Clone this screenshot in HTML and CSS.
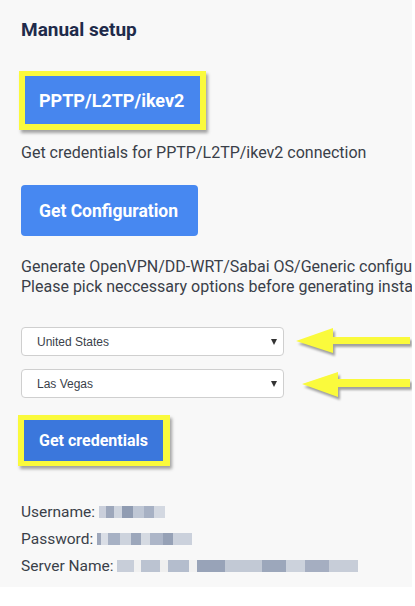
FILE: index.html
```html
<!DOCTYPE html>
<html>
<head>
<meta charset="utf-8">
<link rel="stylesheet" href="styles.css">
</head>
<body>
<div class="page">
  <h2 class="title">Manual setup</h2>
  <div class="hl hl-pptp"><span class="btn btn-pptp">PPTP/L2TP/ikev2</span></div>
  <p class="desc">Get credentials for PPTP/L2TP/ikev2 connection</p>
  <span class="btn btn-config">Get Configuration</span>
  <p class="desc2">Generate OpenVPN/DD-WRT/Sabai OS/Generic configuration files.<br>Please pick neccessary options before generating installation files.</p>
  <div class="select select-first"><span>United States</span><i class="caret"></i></div>
  <div class="select select-second"><span>Las Vegas</span><i class="caret"></i></div>
  <div class="hl hl-cred"><span class="btn btn-cred">Get credentials</span></div>
  <div class="creds">
    <div class="cred-line">Username: <span class="blur blur-user"></span></div>
    <div class="cred-line">Password: <span class="blur blur-pass"></span></div>
    <div class="cred-line">Server Name: <span class="blur blur-server"></span></div>
  </div>
  <svg class="arrows" width="412" height="587" viewBox="0 0 412 587">
    <defs>
      <filter id="sh" x="-10%" y="-30%" width="130%" height="180%">
        <feGaussianBlur stdDeviation="1.2"/>
      </filter>
    </defs>
    <g transform="translate(2,3)" fill="rgba(0,0,0,0.35)" filter="url(#sh)">
      <polygon points="296,341 333,328 333,337 410,337 410,344 333,344 333,353"/>
      <polygon points="302,384 338,372 338,379 410,379 410,387 338,387 338,397"/>
    </g>
    <g fill="#fafa3c">
      <polygon points="296,341 333,328 333,337 410,337 410,344 333,344 333,353"/>
      <polygon points="302,384 338,372 338,379 410,379 410,387 338,387 338,397"/>
    </g>
  </svg>
</div>
</body>
</html>
```
FILE: styles.css
```css
html, body {
  margin: 0;
  padding: 0;
  background: #ffffff;
}

.page {
  position: relative;
  width: 412px;
  height: 587px;
  box-sizing: border-box;
  padding: 16px 0 0 21px;
  background: #f8f8f8;
  overflow: hidden;
  display: flex;
  flex-direction: column;
  align-items: flex-start;
  font-family: Roboto, "Liberation Sans", sans-serif;
  color: #3a3f49;
}

.title {
  margin: 0;
  font-size: 19px;
  line-height: 28px;
  font-weight: 700;
  color: #1f2b4b;
}

.hl {
  display: flex;
  border-style: solid;
  border-color: #fafa3c;
  box-shadow: 2px 3px 3px rgba(0, 0, 0, 0.35);
}

.hl-pptp {
  margin: 27px 0 0 -2px;
  border-width: 5px 6px 6px 6px;
}

.hl-cred {
  margin: 17px 0 0 -3px;
  border-width: 5px 7px 5px 6px;
}

.btn {
  display: flex;
  align-items: center;
  color: #ffffff;
  font-weight: 700;
  font-size: 18px;
  white-space: nowrap;
  box-sizing: border-box;
}

.btn-pptp {
  height: 48px;
  width: 175px;
  padding-left: 14px;
  background: #4786ee;
}

.btn-config {
  margin-top: 22px;
  height: 51px;
  width: 177px;
  padding-left: 18px;
  font-size: 17.5px;
  background: #4788f1;
  border-radius: 4px;
}

.btn-cred {
  height: 41px;
  width: 139px;
  padding-left: 15px;
  font-size: 16px;
  background: #3b77dc;
}

.desc {
  margin: 13px 0 0 0;
  font-size: 16px;
  line-height: 20px;
  white-space: nowrap;
}

.desc2 {
  margin: 21px 0 0 0;
  font-size: 16px;
  line-height: 20px;
  white-space: nowrap;
}

.select {
  display: flex;
  align-items: center;
  justify-content: space-between;
  box-sizing: border-box;
  width: 263px;
  height: 29px;
  padding: 0 6px 0 15px;
  background: #ffffff;
  border: 1px solid #cfcfcf;
  border-radius: 4px;
  font-family: "Liberation Sans", Arial, sans-serif;
  font-size: 12px;
  color: #3a3f4a;
}

.select-first {
  margin-top: 30px;
}

.select-second {
  margin-top: 13px;
}

.caret {
  width: 0;
  height: 0;
  border-left: 3px solid transparent;
  border-right: 3px solid transparent;
  border-top: 6px solid #333333;
}

.creds {
  margin-top: 33px;
  font-size: 15.5px;
  line-height: 27px;
}

.cred-line {
  white-space: nowrap;
}

.blur {
  display: inline-block;
  height: 12px;
  vertical-align: -1px;
  opacity: 0.85;
  filter: blur(0.4px);
}

.blur-user {
  width: 66px;
  background:
    linear-gradient(90deg, #c2c9d6 0 10%, #8e9ab1 10% 22%, #c9cfdb 22% 35%, #7f8ca6 35% 52%, #b6bfcf 52% 68%, #9aa5bb 68% 84%, #cdd3de 84% 100%);
}

.blur-pass {
  width: 95px;
  background:
    linear-gradient(90deg, #8f9ab0 0 4%, #d5dae3 4% 12%, #9aa5bb 12% 24%, #c6cdd9 24% 36%, #8d99b1 36% 46%, #cfd5df 46% 56%, #a1abc0 56% 70%, #8592ab 70% 80%, #c4cbd8 80% 100%);
}

.blur-server {
  width: 241px;
  background:
    linear-gradient(90deg, #c0c7d4 0 7%, #f0f0f0 7% 10%, #b1bacb 10% 18%, #eeeeee 18% 21%, #a9b3c6 21% 30%, #f0f0f0 30% 33%, #8895ae 33% 45%, #b9c1d0 45% 60%, #8d99b1 60% 70%, #c5ccd8 70% 78%, #97a2b8 78% 88%, #bfc6d3 88% 100%);
}

.arrows {
  position: absolute;
  left: 0;
  top: 0;
  pointer-events: none;
}
```
